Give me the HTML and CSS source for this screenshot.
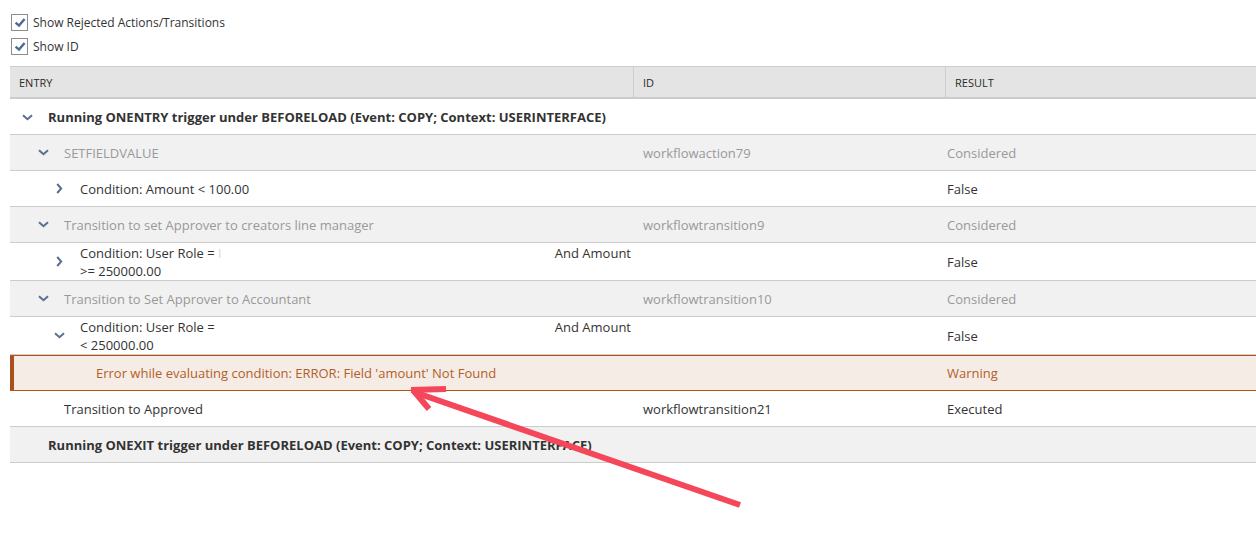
FILE: index.html
```html
<!DOCTYPE html>
<html>
<head>
<meta charset="utf-8">
<link rel="stylesheet" href="styles.css">
</head>
<body>
<div class="page">
  <div class="opts">
    <label class="opt"><span class="cb"><svg width="14" height="14" viewBox="0 0 14 14"><path d="M2.6 7.6 L6 10.6 L11.6 4" fill="none" stroke="#4d6b91" stroke-width="2.4"/></svg></span>Show Rejected Actions/Transitions</label>
    <label class="opt"><span class="cb"><svg width="14" height="14" viewBox="0 0 14 14"><path d="M2.6 7.6 L6 10.6 L11.6 4" fill="none" stroke="#4d6b91" stroke-width="2.4"/></svg></span>Show ID</label>
  </div>

  <div class="table">
    <div class="thead">
      <div class="th th-entry">ENTRY</div>
      <div class="th th-id">ID</div>
      <div class="th th-res">RESULT</div>
    </div>

    <div class="row white bold">
      <div class="entry lvl0"><span class="ico"><svg width="11" height="7" viewBox="0 0 11 7"><path d="M1 1.2 L5.5 5.2 L10 1.2" fill="none" stroke="#5b6f8e" stroke-width="2"/></svg></span><span>Running ONENTRY trigger under BEFORELOAD (Event: COPY; Context: USERINTERFACE)</span></div>
      <div class="id"></div>
      <div class="res"></div>
    </div>

    <div class="row gray muted">
      <div class="entry lvl1"><span class="ico"><svg width="11" height="7" viewBox="0 0 11 7"><path d="M1 1.2 L5.5 5.2 L10 1.2" fill="none" stroke="#5b6f8e" stroke-width="2"/></svg></span><span>SETFIELDVALUE</span></div>
      <div class="id">workflowaction79</div>
      <div class="res">Considered</div>
    </div>

    <div class="row white">
      <div class="entry lvl2"><span class="ico"><svg width="7" height="11" viewBox="0 0 7 11"><path d="M1.2 1 L5.2 5.5 L1.2 10" fill="none" stroke="#5b6f8e" stroke-width="2"/></svg></span><span>Condition: Amount &lt; 100.00</span></div>
      <div class="id"></div>
      <div class="res">False</div>
    </div>

    <div class="row gray muted">
      <div class="entry lvl1"><span class="ico"><svg width="11" height="7" viewBox="0 0 11 7"><path d="M1 1.2 L5.5 5.2 L10 1.2" fill="none" stroke="#5b6f8e" stroke-width="2"/></svg></span><span>Transition to set Approver to creators line manager</span></div>
      <div class="id">workflowtransition9</div>
      <div class="res">Considered</div>
    </div>

    <div class="row white tall">
      <div class="entry lvl2"><span class="ico"><svg width="7" height="11" viewBox="0 0 7 11"><path d="M1.2 1 L5.2 5.5 L1.2 10" fill="none" stroke="#5b6f8e" stroke-width="2"/></svg></span>
        <div class="cond">
          <div class="cond-line"><span>Condition: User Role = <span class="redact">ǀ</span></span><span>And Amount</span></div>
          <div>&gt;= 250000.00</div>
        </div>
      </div>
      <div class="id"></div>
      <div class="res">False</div>
    </div>

    <div class="row gray muted">
      <div class="entry lvl1"><span class="ico"><svg width="11" height="7" viewBox="0 0 11 7"><path d="M1 1.2 L5.5 5.2 L10 1.2" fill="none" stroke="#5b6f8e" stroke-width="2"/></svg></span><span>Transition to Set Approver to Accountant</span></div>
      <div class="id">workflowtransition10</div>
      <div class="res">Considered</div>
    </div>

    <div class="row white tall">
      <div class="entry lvl2"><span class="ico"><svg width="11" height="7" viewBox="0 0 11 7"><path d="M1 1.2 L5.5 5.2 L10 1.2" fill="none" stroke="#5b6f8e" stroke-width="2"/></svg></span>
        <div class="cond">
          <div class="cond-line"><span>Condition: User Role =</span><span>And Amount</span></div>
          <div>&lt; 250000.00</div>
        </div>
      </div>
      <div class="id"></div>
      <div class="res">False</div>
    </div>

    <div class="row warn">
      <div class="entry lvl3"><span class="ico"></span><span>Error while evaluating condition: ERROR: Field 'amount' Not Found</span></div>
      <div class="id"></div>
      <div class="res">Warning</div>
    </div>

    <div class="row white">
      <div class="entry lvl1"><span class="ico"></span><span>Transition to Approved</span></div>
      <div class="id">workflowtransition21</div>
      <div class="res">Executed</div>
    </div>

    <div class="row gray bold">
      <div class="entry lvl0"><span class="ico"></span><span>Running ONEXIT trigger under BEFORELOAD (Event: COPY; Context: USERINTERFACE)</span></div>
      <div class="id"></div>
      <div class="res"></div>
    </div>
  </div>
</div>

<svg class="annot" width="1256" height="553" viewBox="0 0 1256 553">
  <g stroke="#f5475a" stroke-width="6" stroke-linecap="butt" fill="none">
    <line x1="740" y1="505" x2="414" y2="392"/>
    <line x1="411" y1="390" x2="446" y2="389"/>
    <line x1="413" y1="390" x2="429" y2="409"/>
  </g>
</svg>
</body>
</html>
```

FILE: styles.css
```css
html, body {
  margin: 0;
  padding: 0;
  overflow: hidden;
  background: #ffffff;
}
body {
  font-family: "Open Sans", "Liberation Sans", sans-serif;
  color: #333333;
  position: relative;
  width: 1256px;
  height: 553px;
}
.page {
  padding: 10px 0 0 10px;
}
.opts {
  display: flex;
  flex-direction: column;
}
.opt {
  display: flex;
  align-items: center;
  height: 24px;
  font-size: 12px;
  color: #333;
}
.cb {
  width: 15px;
  height: 15px;
  border: 1px solid #8c8c8c;
  margin: 0 5px 0 1px;
  display: flex;
  align-items: center;
  justify-content: center;
  background: #fff;
}
.cb svg { display: block; }

.table {
  margin-top: 8px;
  width: 1300px;
  font-size: 13px;
}
.thead {
  display: grid;
  grid-template-columns: 623px 312px 1fr;
  background: #e4e4e4;
  border-top: 1px solid #cdcdcd;
  border-bottom: 2px solid #cbcbcb;
  height: 30px;
}
.th {
  display: flex;
  align-items: center;
  padding-left: 9px;
  font-size: 11px;
  color: #2a2a2a;
}
.th-id, .th-res {
  border-left: 1px solid #cdcdcd;
}
.row {
  display: grid;
  grid-template-columns: 623px 304px 1fr;
  min-height: 35px;
  border-bottom: 1px solid #cccccc;
  line-height: 18px;
}
.row.white { background: #ffffff; }
.row.gray { background: #f1f1f1; }
.row.bold { font-weight: 700; }
.row.muted { color: #999999; }
.row.tall { min-height: 37px; }
.row.warn {
  background: #f6ece6;
  color: #b0602a;
  border-top: 1px solid #b5531a;
  border-bottom: 1px solid #b5531a;
  box-shadow: inset 4px 0 0 #a9501c;
  min-height: 34px;
}
.entry {
  display: flex;
  align-items: center;
}
.lvl0 { padding-left: 12px; }
.lvl1 { padding-left: 28px; }
.lvl2 { padding-left: 44px; }
.lvl3 { padding-left: 60px; }
.ico {
  width: 11px;
  flex: 0 0 11px;
  margin-right: 15px;
  display: flex;
  align-items: center;
  justify-content: center;
}
.ico svg { display: block; }
.lvl0 .ico { margin-top: 1px; }
.cond {
  flex: 1;
  padding-right: 2px;
  padding-top: 1px;
}
.cond-line {
  display: flex;
  justify-content: space-between;
}
.redact { color: #dddddd; }
.id, .res {
  display: flex;
  align-items: center;
  padding-left: 10px;
}
.annot {
  position: absolute;
  left: 0;
  top: 0;
  pointer-events: none;
}
```
